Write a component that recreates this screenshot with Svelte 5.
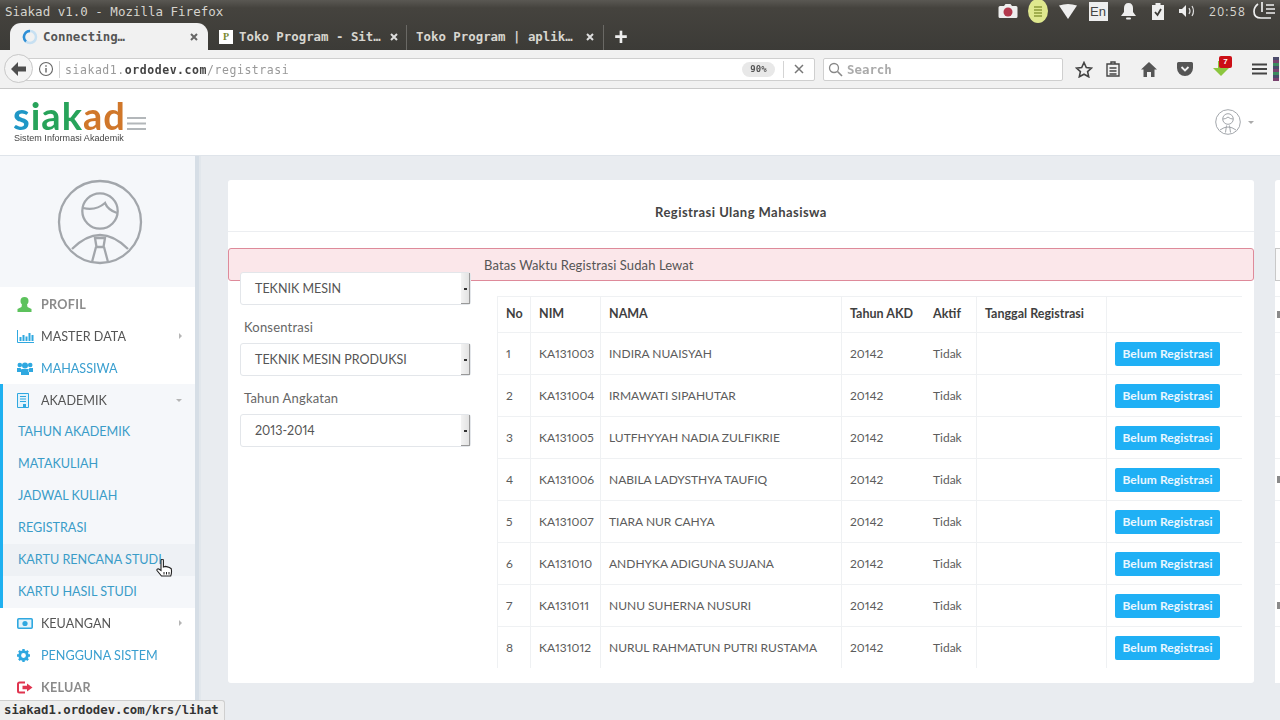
<script>
  const students = [
    ['1', 'KA131003', 'INDIRA NUAISYAH'],
    ['2', 'KA131004', 'IRMAWATI SIPAHUTAR'],
    ['3', 'KA131005', 'LUTFHYYAH NADIA ZULFIKRIE'],
    ['4', 'KA131006', 'NABILA LADYSTHYA TAUFIQ'],
    ['5', 'KA131007', 'TIARA NUR CAHYA'],
    ['6', 'KA131010', 'ANDHYKA ADIGUNA SUJANA'],
    ['7', 'KA131011', 'NUNU SUHERNA NUSURI'],
    ['8', 'KA131012', 'NURUL RAHMATUN PUTRI RUSTAMA']
  ];
  const subMenu = ['TAHUN AKADEMIK', 'MATAKULIAH', 'JADWAL KULIAH', 'REGISTRASI', 'KARTU RENCANA STUDI', 'KARTU HASIL STUDI'];
</script>

<div class="shell">
  <header class="chrome">
    <div class="titlebar">
      <span class="wintitle">Siakad v1.0 - Mozilla Firefox</span>
      <div class="tray">
        <span class="tray-cell"><svg width="20" height="16" viewBox="0 0 20 16"><path d="M2 3h4l1.500-2h5L14 3h4a1.500 1.500 0 0 1 1.500 1.500v9A1.500 1.500 0 0 1 18 15H2a1.500 1.500 0 0 1-1.500-1.500v-9A1.500 1.500 0 0 1 2 3z" fill="#eeeeee"/><circle cx="10" cy="9" r="4.500" fill="#b2384c"/></svg></span>
        <span class="tray-cell"><svg width="20" height="24" viewBox="0 0 20 24"><ellipse cx="10" cy="12" rx="10" ry="12" fill="#dfe88e"/><path d="M6 8h8M6 11h8M6 14h8M6 17h8" stroke="#8d9a3a" stroke-width="1.500"/></svg></span>
        <span class="tray-cell"><svg width="18" height="15" viewBox="0 0 18 15"><path d="M0 1.500Q9-1.500 18 1.500L9 15z" fill="#eeeeee"/></svg></span>
        <span class="tray-cell"><span class="en">En</span></span>
        <span class="tray-cell"><svg width="15" height="17" viewBox="0 0 15 17"><path d="M7.500 0c3 0 4.500 2 4.500 5v4l3 4H0l3-4V5c0-3 1.500-5 4.500-5z" fill="#eeeeee"/><rect x="5" y="14.500" width="5" height="2" rx="1" fill="#eeeeee"/></svg></span>
        <span class="tray-cell"><svg width="12" height="18" viewBox="0 0 12 18"><path d="M0 3h3.500V1h5v2H12v15H0z" fill="#eeeeee"/><path d="M3 10l2.500 3L9 7" fill="none" stroke="#3c3b37" stroke-width="1.800"/></svg></span>
        <span class="tray-cell"><svg width="18" height="14" viewBox="0 0 18 14"><path d="M0 5h3l4-4v12l-4-4H0z" fill="#eeeeee"/><path d="M10 4q2 3 0 6M13 2q3 5 0 10" fill="none" stroke="#dddddd" stroke-width="1.200"/></svg></span>
        <span class="clock">20:58</span>
        <span class="power"><svg width="26" height="20" viewBox="0 0 26 20"><path d="M5 3Q1 6 1 10.500 1 17 8 17h10M9 1v10M13 4h8M13 8h9M13 12h9" fill="none" stroke="#eeeeee" stroke-width="1.700"/></svg></span>
      </div>
    </div>

    <div class="tabstrip">
      <div class="tab active">
        <svg class="spinner" width="16" height="16" viewBox="0 0 16 16"><circle cx="8" cy="8" r="6" fill="none" stroke="#c7e0f2" stroke-width="2.500"/><path d="M8 2A6 6 0 0 0 4 12.500" fill="none" stroke="#2f8fd5" stroke-width="2.500"/></svg>
        <span class="tabtext">Connecting…</span>
        <svg class="tabclose" width="8" height="8" viewBox="0 0 8 8"><path d="M1 1l6 6M7 1L1 7" stroke="#666" stroke-width="2"/></svg>
      </div>
      <div class="tab second">
        <span class="favicon">P</span>
        <span class="tabtext">Toko Program - Sit…</span>
        <svg class="tabclose" width="8" height="8" viewBox="0 0 8 8"><path d="M1 1l6 6M7 1L1 7" stroke="#ddd" stroke-width="2"/></svg>
      </div>
      <div class="tab third">
        <span class="tabtext">Toko Program | aplik…</span>
        <svg class="tabclose" width="8" height="8" viewBox="0 0 8 8"><path d="M1 1l6 6M7 1L1 7" stroke="#ddd" stroke-width="2"/></svg>
      </div>
      <span class="newtab">+</span>
    </div>
  </header>

  <nav class="toolbar">
    <span class="back"><svg width="16" height="14" viewBox="0 0 16 14"><path d="M7 0L0 7l7 7V9.500h8v-5H7z" fill="#4e4e4e"/></svg></span>
    <div class="urlbar">
      <svg class="info" width="16" height="16" viewBox="0 0 16 16"><circle cx="8" cy="8" r="6.500" fill="none" stroke="#666" stroke-width="1.100"/><path d="M8 7v4.500M8 4.300v1.400" stroke="#666" stroke-width="1.400"/></svg>
      <span class="urlsep"></span>
      <span class="url">siakad1.<b>ordodev.com</b>/registrasi</span>
      <span class="zoompill">90%</span>
      <span class="urlsep right"></span>
      <svg class="stop" width="10" height="10" viewBox="0 0 10 10"><path d="M1 1l8 8M9 1l-8 8" stroke="#777" stroke-width="1.500"/></svg>
    </div>
    <div class="search">
      <svg width="15" height="15" viewBox="0 0 15 15"><circle cx="6" cy="6" r="4.500" fill="none" stroke="#888" stroke-width="1.300"/><path d="M9.500 9.500L14 14" stroke="#888" stroke-width="1.600"/></svg>
      <span>Search</span>
    </div>
    <div class="tools">
      <span class="tool t-star"><svg width="18" height="17" viewBox="0 0 18 17"><path d="M9 1.500l2.300 5 5.200.6-3.900 3.500 1.100 5.200L9 13.200l-4.700 2.600 1.100-5.200L1.500 7.100l5.200-.6z" fill="none" stroke="#444" stroke-width="1.600"/></svg></span>
      <span class="tool t-clip"><svg width="14" height="16" viewBox="0 0 14 16"><path d="M1 3h12v12H1zM5 3V1h4v2M3.500 7h7M3.500 10h7M3.500 13h7" fill="none" stroke="#444" stroke-width="1.400"/></svg></span>
      <span class="tool t-home"><svg width="16" height="15" viewBox="0 0 16 15"><path d="M8 0l8 7.500h-2.500V15H10v-5H6v5H2.500V7.500H0z" fill="#555"/></svg></span>
      <span class="tool t-pocket"><svg width="16" height="14" viewBox="0 0 16 14"><path d="M1.500 0h13A1.500 1.500 0 0 1 16 1.500V6a8 8 0 0 1-16 0V1.500A1.500 1.500 0 0 1 1.500 0z" fill="#555"/><path d="M4.500 5L8 8.500 11.500 5" fill="none" stroke="#f1f1f1" stroke-width="1.800"/></svg></span>
      <span class="tool t-dl"><svg width="16" height="17" viewBox="0 0 16 17"><path d="M5 0h6v7h5l-8 8-8-8h5z" fill="#8cc63f"/></svg><span class="badge">7</span></span>
      <span class="tool t-menu"><svg width="15" height="12" viewBox="0 0 15 12"><path d="M0 1.500h15M0 6h15M0 10.500h15" stroke="#444" stroke-width="2.200"/></svg></span>
      <span class="ext"></span>
    </div>
  </nav>

  <div class="siteheader">
    <div class="brand">
      <div class="logo">
        <div class="wordmark"><span class="c-blue">s</span><span class="c-green">iak</span><span class="c-orange">ad</span></div>
        <div class="tagline">Sistem Informasi Akademik</div>
      </div>
      <svg class="burger" width="19" height="15" viewBox="0 0 19 15"><path d="M0 2h19M0 7.500h19M0 13h19" stroke="#b3b7ba" stroke-width="2"/></svg>
    </div>
    <div class="userbox">
      <svg width="26" height="26" viewBox="0 0 26 26"><g fill="none" stroke="#a2a6ab" stroke-width="1"><circle cx="13" cy="13" r="12.300"/><circle cx="13" cy="10" r="5.300"/><path d="M8 10q3 0 5-2 2 2 5 2M5 21q8-6 16 0M11.500 16.500l-1 7M14.500 16.500l1 7"/></g></svg>
      <span class="caret"></span>
    </div>
  </div>

  <div class="main">
    <aside class="sidebar">
      <div class="avatarbox">
        <svg width="88" height="88" viewBox="56 178 88 88"><g fill="none" stroke="#a2a6ab" stroke-width="2.300"><circle cx="100" cy="222" r="41"/><circle cx="100" cy="211" r="17.700"/><path d="M83 208q13 3 22-5q3 7 12 10"/><path d="M72 249q28-28 56 0"/><path d="M95 238l1.500 9h7l1.500-9zM96 247l-4 15M104 247l4 15"/></g></svg>
      </div>
      <ul class="menu">
        <li class="item muted">
          <span class="ic"><svg width="15" height="15" viewBox="0 0 15 15"><circle cx="7.500" cy="4" r="4" fill="#5cc25c"/><path d="M5 7h5l.5 3 4 2v3H.5v-3l4-2z" fill="#5cc25c"/></svg></span>
          <span class="strong">PROFIL</span>
        </li>
        <li class="item dark">
          <span class="ic"><svg width="17" height="13" viewBox="0 0 17 13"><path d="M.5 0v12.500H17" fill="none" stroke="#2fa8e0" stroke-width="1"/><path d="M3.500 7v4M6.500 5v6M9.500 6.500V11M12.500 3v8M15.500 5v6" stroke="#2fa8e0" stroke-width="2"/></svg></span>
          <span>MASTER DATA</span>
          <span class="arrow-r"></span>
        </li>
        <li class="item link">
          <span class="ic"><svg width="16" height="13" viewBox="0 0 16 13"><g fill="#2fa8e0"><circle cx="8" cy="3.500" r="3"/><circle cx="2.800" cy="3" r="2.300"/><circle cx="13.200" cy="3" r="2.300"/><path d="M0 6h3.500l1 1.500V10H0zM16 6h-3.500l-1 1.500V10H16zM5 7h6l1 1v5H4V8z"/></g></svg></span>
          <span>MAHASSIWA</span>
        </li>
        <li class="group">
          <div class="item dark">
            <span class="ic"><svg width="12" height="15" viewBox="0 0 12 15"><path d="M.5.500h11v14H.5z" fill="#e4f3fb" stroke="#2fa8e0"/><path d="M3 3.500h6M3 6h6M3 8.500h6" stroke="#2fa8e0" stroke-width="1.200"/><rect x="6" y="11" width="3" height="3.500" fill="#2fa8e0"/></svg></span>
            <span>AKADEMIK</span>
            <span class="arrow-d"></span>
          </div>
          {#each subMenu as label, i}
            <div class="subitem" class:hover={i === 4}>{label}</div>
          {/each}
        </li>
        <li class="item dark">
          <span class="ic"><svg width="16" height="11" viewBox="0 0 16 11"><rect x=".8" y=".8" width="14.400" height="9.400" rx="1" fill="#e4f3fb" stroke="#2fa8e0" stroke-width="1.600"/><circle cx="8" cy="5.500" r="2.600" fill="#2fa8e0"/></svg></span>
          <span>KEUANGAN</span>
          <span class="arrow-r"></span>
        </li>
        <li class="item link">
          <span class="ic"><svg width="13" height="13" viewBox="0 0 13 13"><circle cx="6.500" cy="6.500" r="3.800" fill="none" stroke="#2fa8e0" stroke-width="2.800"/><path d="M6.500 0v13M0 6.500h13M1.900 1.900l9.200 9.200M11.100 1.900l-9.200 9.200" stroke="#2fa8e0" stroke-width="2.400" stroke-dasharray="2.200 8.600"/></svg></span>
          <span>PENGGUNA SISTEM</span>
        </li>
        <li class="item muted">
          <span class="ic"><svg width="16" height="13" viewBox="0 0 16 13"><path d="M8 1.500H2.500a1.500 1.500 0 0 0-1.500 1.500v7a1.500 1.500 0 0 0 1.500 1.500H8" fill="none" stroke="#e0344f" stroke-width="2"/><path d="M10 2.500l5.500 4-5.500 4V8.300H5.500V4.700H10z" fill="#e0344f"/></svg></span>
          <span class="strong">KELUAR</span>
        </li>
      </ul>
    </aside>
    <div class="rail"></div>

    <main class="content">
      <section class="card">
        <h1 class="cardtitle">Registrasi Ulang Mahasiswa</h1>
        <div class="alert">Batas Waktu Registrasi Sudah Lewat</div>
        <div class="cardbody">
          <form class="filters">
            <div class="select"><span>TEKNIK MESIN</span><i class="spin"></i></div>
            <div class="label">Konsentrasi</div>
            <div class="select"><span>TEKNIK MESIN PRODUKSI</span><i class="spin"></i></div>
            <div class="label">Tahun Angkatan</div>
            <div class="select"><span>2013-2014</span><i class="spin"></i></div>
          </form>
          <div class="tablewrap">
            <table>
              <colgroup>
                <col class="c1" /><col class="c2" /><col class="c3" /><col class="c4" /><col class="c5" /><col class="c6" /><col class="c7" />
              </colgroup>
              <thead>
                <tr><th>No</th><th>NIM</th><th>NAMA</th><th class="nr">Tahun AKD</th><th>Aktif</th><th>Tanggal Registrasi</th><th></th></tr>
              </thead>
              <tbody>
                {#each students as s}
                  <tr>
                    <td class="txt">{s[0]}</td><td class="txt">{s[1]}</td><td class="txt">{s[2]}</td><td class="txt nr">20142</td><td class="txt">Tidak</td><td></td>
                    <td><button type="button">Belum Registrasi</button></td>
                  </tr>
                {/each}
              </tbody>
            </table>
          </div>
        </div>
      </section>
      <section class="card next">
        <div class="cardtitle"></div>
        <div class="alert ghost"></div>
        <div class="nextrows">
          <div class="nextrow"><i class="stub"></i></div>
          {#each students as s, i}
            <div class="nextrow">{#if i === 3 || i === 6}<i class="stub"></i>{/if}</div>
          {/each}
        </div>
      </section>
    </main>
  </div>

  <div class="status">siakad1.ordodev.com/krs/lihat</div>
  <svg class="cursor" width="17" height="18" viewBox="0 0 17 18"><path d="M5 1.500a1.200 1.200 0 0 1 2.400 0V8l2-.6 2 .5 2 .6 1.800 1.200c.6 2.500.4 4.800-.5 7.300H5.500L1 11.500c-.4-1 .6-2 1.800-1.500L5 11.500z" fill="#fff" stroke="#222" stroke-width="1.100"/><path d="M8 13v2.500M10.500 13v2.500M13 13v2.500" stroke="#222" stroke-width="1"/></svg>
</div>

<style>
  :global(body) { margin: 0; background: #e9ecf0; }
  * { box-sizing: border-box; }
  .shell { width: 1280px; height: 720px; overflow: hidden; position: relative; display: flex; flex-direction: column; font-family: Lato, "Open Sans", sans-serif; font-variant-numeric: proportional-nums; color: #555; filter: blur(.35px); }

  .chrome { height: 50px; background: linear-gradient(#5a5853 0, #45433e 8px, #3c3b37 100%); font-family: "DejaVu Sans Mono", monospace; }
  .titlebar { height: 22px; display: flex; justify-content: space-between; align-items: center; padding: 0 0 0 5px; }
  .wintitle { font-size: 12.500px; color: #d6d4ce; }
  .tray { display: flex; align-items: center; }
  .tray-cell { width: 30px; display: flex; justify-content: center; align-items: center; }
  .en { width: 19px; height: 19px; background: #eee; color: #444; font: 13px "Liberation Sans", sans-serif; display: flex; align-items: center; justify-content: center; }
  .clock { width: 40px; margin-left: 6px; font: 12px "Open Sans", sans-serif; letter-spacing: 1.300px; color: #dad8d2; white-space: nowrap; }
  .power { margin-left: 4px; width: 27px; display: flex; }

  .tabstrip { height: 28px; display: flex; align-items: flex-end; padding-left: 10px; }
  .tab { display: flex; align-items: center; height: 25px; padding-bottom: 2px; font-size: 12.400px; font-weight: 700; color: #d8d6d0; }
  .tabclose { flex: none; }
  .tab.active { width: 198px; height: 27px; padding: 0 10px 0 12px; background: #f1f1f1; border-radius: 11px 11px 0 0; color: #555; }
  .spinner { margin-right: 5px; flex: none; }
  .tab.active .tabtext { flex: 1; }
  .tab.second { width: 199px; padding-left: 11px; padding-right: 8px; border-right: 1px solid #6a6965; }
  .tab.second .tabtext { flex: 1; margin-left: 6px; }
  .favicon { width: 14px; height: 14px; background: #fff; color: #7a8a2f; font: 700 10px "Liberation Serif", serif; display: flex; align-items: center; justify-content: center; flex: none; }
  .tab.third { width: 197px; padding-left: 9px; padding-right: 9px; border-right: 1px solid #6a6965; }
  .tab.third .tabtext { flex: 1; }
  .newtab { height: 25px; width: 34px; text-align: center; font: 700 23px/24px "Liberation Sans", sans-serif; color: #eee; }

  .toolbar { height: 39px; flex: none; display: flex; align-items: center; background: #f1f1f1; border-bottom: 1px solid #c9c9c9; position: relative; font-family: "DejaVu Sans Mono", monospace; }
  .back { position: absolute; left: 4px; top: 4px; width: 29px; height: 29px; border-radius: 50%; background: #f4f4f4; border: 1px solid #c8c8c8; display: flex; align-items: center; justify-content: center; z-index: 1; }
  .urlbar { margin-left: 24px; width: 791px; height: 23px; background: #fff; border: 1px solid #cfcfcf; border-radius: 2px; display: flex; align-items: center; padding-left: 13px; }
  .info { flex: none; }
  .urlsep { width: 1px; height: 17px; background: #d4d4d4; margin: 0 5px; flex: none; }
  .urlsep.right { margin: 0 10px 0 8px; }
  .url { flex: 1; font-size: 11.500px; color: #999; letter-spacing: .55px; padding-top: 1px; }
  .url b { color: #444; }
  .zoompill { width: 33px; height: 15px; border-radius: 8px; background: #e8e8e8; font-size: 9px; font-weight: 700; color: #555; text-align: center; line-height: 15px; }
  .stop { margin-right: 10px; flex: none; }
  .search { margin-left: 8px; width: 240px; height: 23px; background: #fff; border: 1px solid #cfcfcf; border-radius: 2px; display: flex; align-items: center; gap: 4px; padding-left: 4px; font-size: 12.400px; font-weight: 700; color: #aaa; }
  .tools { display: flex; align-items: center; flex: 1; height: 100%; }
  .tool { display: flex; justify-content: center; align-items: center; position: relative; flex: none; }
  .t-star { width: 18px; margin-left: 12px; }
  .t-clip { width: 14px; margin-left: 13px; }
  .t-home { width: 16px; margin-left: 21px; }
  .t-pocket { width: 16px; margin-left: 20px; }
  .t-dl { width: 16px; margin-left: 20px; }
  .t-menu { width: 15px; margin-left: 23px; }
  .badge { position: absolute; left: 6px; top: -5px; width: 13px; height: 12px; background: #cc0f16; color: #fff; border-radius: 2px; font: 700 8px/12px "Liberation Sans", sans-serif; text-align: center; }
  .ext { width: 6px; height: 24px; margin-left: 6px; background: repeating-linear-gradient(#4a4a6a 0 3px, #79406d 3px 6px, #3c8a5e 6px 9px); }

  .siteheader { height: 67px; flex: none; background: #fff; border-bottom: 1px solid #dfe4ea; display: flex; justify-content: space-between; align-items: center; padding: 0 26px 0 13px; }
  .brand { display: flex; align-items: flex-end; gap: 4px; }
  .logo { width: 110px; }
  .wordmark { font: 700 38px/31px Lato, sans-serif; letter-spacing: 1px; white-space: nowrap; }
  .c-blue { color: #1f97c6; }
  .c-green { color: #27a35a; }
  .c-orange { color: #d0772a; }
  .tagline { font: 9px/11px "Liberation Sans", sans-serif; color: #444; margin: 2px 0 0 1px; white-space: nowrap; letter-spacing: .05px; }
  .burger { margin-bottom: 13px; }
  .userbox { display: flex; align-items: center; gap: 7px; }
  .caret { width: 0; height: 0; border: 3px solid transparent; border-top-color: #aaa; border-bottom: 0; }

  .main { flex: 1; display: flex; min-height: 0; }
  .sidebar { width: 195px; flex: none; background: #fff; display: flex; flex-direction: column; }
  .avatarbox { height: 131px; background: #f5f7fa; display: flex; justify-content: center; align-items: flex-start; padding: 22px 0 0 5px; flex: none; }
  .menu { list-style: none; margin: 1.600px 0 0; padding: 0; font-size: 12.600px; }
  .item { height: 31.900px; display: flex; align-items: center; padding-left: 17px; position: relative; }
  .ic { width: 24px; display: flex; align-items: center; flex: none; }
  .item.muted { color: #8b8b8b; }
  .item.dark { color: #555; }
  .item.link { color: #3a9fd0; }
  .strong { font-weight: 700; letter-spacing: .3px; }
  .arrow-r { position: absolute; right: 13px; width: 0; height: 0; border: 3px solid transparent; border-left-color: #b5b5b5; border-right: 0; }
  .arrow-d { position: absolute; right: 13px; width: 0; height: 0; border: 3px solid transparent; border-top-color: #b5b5b5; border-bottom: 0; }
  .group { background: #f5f7fa; border-left: 3px solid #1fb0f0; }
  .group .item { padding-left: 14px; }
  .subitem { height: 31.900px; padding-left: 15px; line-height: 32px; color: #3a9cc8; white-space: nowrap; }
  .subitem.hover { background: #eef1f5; }
  .rail { width: 6px; flex: none; background: #d6dee6; border-right: 2px solid #e2e7ec; }

  .content { flex: 1; background: #e9ecf0; padding: 24px 0 0 27px; display: flex; gap: 21px; overflow: hidden; min-width: 0; }
  .card { width: 1026px; height: 503px; flex: none; background: #fff; border-radius: 3px; }
  .cardtitle { height: 52px; margin: 0; padding-top: 25px; border-bottom: 1px solid #eceef1; text-align: center; font-size: 13px; font-weight: 700; line-height: 15px; color: #444; letter-spacing: .45px; }
  .alert { margin-top: 16px; height: 33px; line-height: 33px; padding-left: 255px; background: #fbe7ea; border: 1px solid #de8a9a; border-radius: 3px; font-size: 13px; letter-spacing: .1px; color: #555; }
  .alert.ghost { background: #fafafa; border-color: #c8c8c8; border-radius: 0; }
  .cardbody { display: flex; align-items: flex-start; padding: 0 0 0 12px; gap: 26px; position: relative; }
  .filters { width: 231px; flex: none; margin-top: -9px; }
  .select { height: 33px; background: #fff; border: 1px solid #e3e6ea; border-radius: 3px; display: flex; align-items: center; justify-content: space-between; padding-left: 14px; font-size: 12.500px; color: #555; }
  .spin { width: 9px; height: 31px; background: linear-gradient(90deg, #f3f3f3, #e3e3e3); border-right: 1px solid #999; border-bottom: 1px solid #999; position: relative; }
  .spin::after { content: ""; position: absolute; left: 3px; top: 15px; width: 3px; height: 2px; background: #333; }
  .label { margin: 14px 0 0 4px; height: 24px; font-size: 13px; line-height: 16px; color: #666; letter-spacing: .2px; }
  .tablewrap { margin-top: 15px; width: 745px; height: 372px; overflow: hidden; flex: none; }
  table { width: 745px; border-collapse: collapse; table-layout: fixed; font-size: 12px; }
  .c1 { width: 33px; } .c2 { width: 70px; } .c3 { width: 241px; } .c4 { width: 83px; } .c5 { width: 52px; } .c6 { width: 130px; } .c7 { width: 136px; }
  th, td { border: 1px solid #eff1f3; padding: 0 0 0 8px; text-align: left; height: 42px; white-space: nowrap; overflow: hidden; color: #5c5c5c; }
  th { height: 36px; padding-bottom: 2px; font-size: 12.500px; font-weight: 700; color: #3f3f3f; }
  td.txt { padding-bottom: 1px; }
  .nr { border-right-color: transparent; }
  button { display: block; width: 105px; height: 24px; border: 0; padding: 0; margin: 0; background: #1fb0f5; border-radius: 2px; color: #eaf7ff; font: 700 12px Lato, sans-serif; letter-spacing: .1px; }

  .card.next { width: 300px; border-radius: 3px 0 0 0; }
  .card.next .alert { padding: 0; }
  .nextrows { margin-top: 15px; }
  .nextrow { height: 42px; border-top: 1px solid #eff1f3; display: flex; align-items: center; }
  .nextrow:first-child { height: 36px; }
  .stub { width: 3px; height: 7px; margin-left: 2px; background: #8a8a8a; }

  .status { position: absolute; left: 0; bottom: 0; height: 20px; width: 225px; padding-left: 4px; background: #efefef; border: 1px solid #cfcfcf; border-left: 0; border-bottom: 0; border-radius: 0 3px 0 0; font: 700 12.300px/19px "DejaVu Sans Mono", monospace; color: #333; white-space: nowrap; }
  .cursor { position: absolute; left: 156px; top: 559px; }
</style>
